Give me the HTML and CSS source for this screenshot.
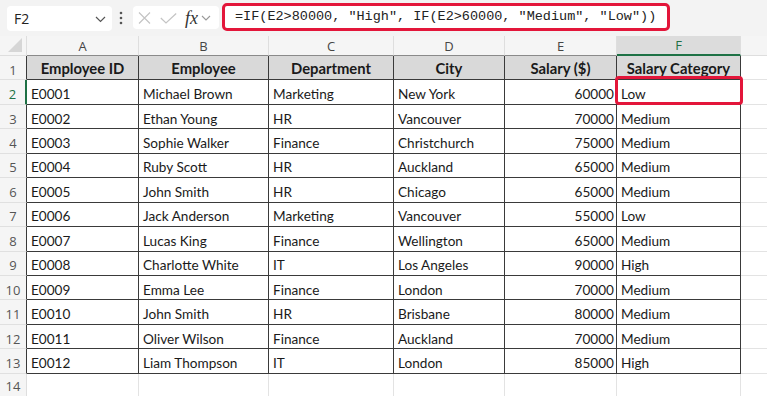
FILE: index.html
```html
<!DOCTYPE html>
<html>
<head>
<meta charset="utf-8">
<link rel="stylesheet" href="styles.css">
</head>
<body>
<div class="app">
  <div class="toolbar">
    <div class="namebox">
      <span class="nb-text">F2</span>
      <svg class="nb-chev" width="11" height="7" viewBox="0 0 11 7"><path d="M1 1 L5.5 5.5 L10 1" fill="none" stroke="#555" stroke-width="1.2"/></svg>
    </div>
    <svg class="dots" width="4" height="14" viewBox="0 0 4 14"><circle cx="2" cy="2" r="1.3" fill="#555"/><circle cx="2" cy="7" r="1.3" fill="#555"/><circle cx="2" cy="12" r="1.3" fill="#555"/></svg>
    <div class="fxbox">
      <svg class="ic-x" width="13" height="12" viewBox="0 0 13 12"><path d="M1 0.5 L12 11.5 M12 0.5 L1 11.5" fill="none" stroke="#c4c4c4" stroke-width="1.2"/></svg>
      <svg class="ic-v" width="17" height="11" viewBox="0 0 17 11"><path d="M0.8 5 L6 10 L16.2 0.5" fill="none" stroke="#c4c4c4" stroke-width="1.2"/></svg>
      <span class="fx">fx</span>
      <svg class="fx-chev" width="10" height="6" viewBox="0 0 10 6"><path d="M1 1 L5 5 L9 1" fill="none" stroke="#999" stroke-width="1.1"/></svg>
    </div>
    <div class="formula">=IF(E2&gt;80000, "High", IF(E2&gt;60000, "Medium", "Low"))</div>
  </div>
  <div class="sheet">
    <div class="ch corner"><svg width="14" height="14" viewBox="0 0 14 14"><path d="M14 0 L14 14 L0 14 Z" fill="#d6d6d6"/></svg></div>
    <div class="ch">A</div><div class="ch">B</div><div class="ch">C</div><div class="ch">D</div><div class="ch">E</div><div class="ch sel">F</div><div class="ch last"></div>

    <div class="rn">1</div>
    <div class="c hd">Employee ID</div><div class="c hd">Employee</div><div class="c hd">Department</div><div class="c hd">City</div><div class="c hd">Salary ($)</div><div class="c hd">Salary Category</div><div class="g"></div>

    <div class="rn rsel">2</div>
    <div class="c">E0001</div><div class="c">Michael Brown</div><div class="c">Marketing</div><div class="c">New York</div><div class="c n">60000</div><div class="c active">Low<span class="redbox"></span></div><div class="g"></div>

    <div class="rn">3</div>
    <div class="c">E0002</div><div class="c">Ethan Young</div><div class="c">HR</div><div class="c">Vancouver</div><div class="c n">70000</div><div class="c">Medium</div><div class="g"></div>

    <div class="rn">4</div>
    <div class="c">E0003</div><div class="c">Sophie Walker</div><div class="c">Finance</div><div class="c">Christchurch</div><div class="c n">75000</div><div class="c">Medium</div><div class="g"></div>

    <div class="rn">5</div>
    <div class="c">E0004</div><div class="c">Ruby Scott</div><div class="c">HR</div><div class="c">Auckland</div><div class="c n">65000</div><div class="c">Medium</div><div class="g"></div>

    <div class="rn">6</div>
    <div class="c">E0005</div><div class="c">John Smith</div><div class="c">HR</div><div class="c">Chicago</div><div class="c n">65000</div><div class="c">Medium</div><div class="g"></div>

    <div class="rn">7</div>
    <div class="c">E0006</div><div class="c">Jack Anderson</div><div class="c">Marketing</div><div class="c">Vancouver</div><div class="c n">55000</div><div class="c">Low</div><div class="g"></div>

    <div class="rn">8</div>
    <div class="c">E0007</div><div class="c">Lucas King</div><div class="c">Finance</div><div class="c">Wellington</div><div class="c n">65000</div><div class="c">Medium</div><div class="g"></div>

    <div class="rn">9</div>
    <div class="c">E0008</div><div class="c">Charlotte White</div><div class="c">IT</div><div class="c">Los Angeles</div><div class="c n">90000</div><div class="c">High</div><div class="g"></div>

    <div class="rn">10</div>
    <div class="c">E0009</div><div class="c">Emma Lee</div><div class="c">Finance</div><div class="c">London</div><div class="c n">70000</div><div class="c">Medium</div><div class="g"></div>

    <div class="rn">11</div>
    <div class="c">E0010</div><div class="c">John Smith</div><div class="c">HR</div><div class="c">Brisbane</div><div class="c n">80000</div><div class="c">Medium</div><div class="g"></div>

    <div class="rn">12</div>
    <div class="c">E0011</div><div class="c">Oliver Wilson</div><div class="c">Finance</div><div class="c">Auckland</div><div class="c n">70000</div><div class="c">Medium</div><div class="g"></div>

    <div class="rn">13</div>
    <div class="c">E0012</div><div class="c">Liam Thompson</div><div class="c">IT</div><div class="c">London</div><div class="c n">85000</div><div class="c">High</div><div class="g"></div>

    <div class="rn empty">14</div>
    <div class="e"></div><div class="e"></div><div class="e"></div><div class="e"></div><div class="e"></div><div class="e"></div><div class="e last"></div>
  </div>
</div>
</body>
</html>
```

FILE: styles.css
```css
html, body {
  margin: 0;
  padding: 0;
  background: #ffffff;
}
.app {
  width: 767px;
  height: 396px;
  overflow: hidden;
  display: flex;
  flex-direction: column;
  font-family: Lato, "Liberation Sans", sans-serif;
}
.toolbar {
  height: 36px;
  flex: none;
  background: #f3f3f3;
  display: flex;
  align-items: flex-start;
  box-sizing: border-box;
}
.namebox {
  margin: 6px 0 0 7px;
  width: 105px;
  height: 25px;
  background: #fff;
  border-radius: 4px;
  display: flex;
  align-items: center;
  justify-content: space-between;
  padding: 0 6px 0 7px;
  box-sizing: border-box;
  font-family: "Open Sans", sans-serif;
  font-size: 14px;
  color: #222;
}
.nb-chev { margin-top: 1px; }
.dots {
  margin: 11px 0 0 7px;
}
.fxbox {
  margin: 6px 0 0 10px;
  width: 86px;
  height: 23px;
  background: #fff;
  border-radius: 4px;
  display: flex;
  align-items: center;
  padding-left: 5px;
  box-sizing: border-box;
}
.ic-x { margin-top: 1px; }
.ic-v { margin: 1px 0 0 9px; }
.fx {
  font-family: "Liberation Serif", serif;
  font-style: italic;
  font-size: 18px;
  color: #333;
  margin-left: 8px;
  line-height: 20px;
}
.fx-chev { margin: 1px 0 0 3px; }
.formula {
  margin: 3px 0 0 3px;
  width: 448px;
  height: 28px;
  background: #fff;
  border: 3px solid #e3163a;
  border-radius: 5px;
  box-sizing: border-box;
  padding-left: 10px;
  font-family: "Liberation Mono", monospace;
  font-size: 13.5px;
  line-height: 22px;
  color: #222;
  white-space: nowrap;
}
.sheet {
  flex: 1;
  min-height: 0;
  display: grid;
  grid-template-columns: 27px 112px 130px 125px 111px 112px 124px 1fr;
  grid-template-rows: 20px repeat(13, 24.45px) 1fr;
  font-size: 13.6px;
  color: #1a1a1a;
}
.ch {
  background: #f5f5f5;
  border-right: 1px solid #dedede;
  border-bottom: 1px solid #8a8a8a;
  font-family: "Open Sans", sans-serif;
  font-size: 13px;
  color: #454545;
  display: flex;
  align-items: center;
  justify-content: center;
}
.ch.corner {
  justify-content: flex-end;
  align-items: flex-end;
  padding: 0 4px 3px 0;
  border-bottom-color: #dedede;
}
.ch.last { border-right: none; border-bottom-color: #dedede; }
.ch.sel {
  background: #dcdcdc;
  color: #1e7145;
  border-bottom: 2px solid #1e7145;
}
.rn {
  background: #f5f5f5;
  border-right: 1px solid #3a3a3a;
  border-bottom: 1px solid #e0e0e0;
  font-family: "Open Sans", sans-serif;
  font-size: 13px;
  color: #555;
  display: flex;
  align-items: center;
  justify-content: center;
  padding-top: 4px;
  box-sizing: border-box;
}
.rn.rsel {
  color: #1e7145;
  border-right: 2px solid #1e7145;
}
.rn.empty {
  border-right-color: #dedede;
  border-bottom: none;
  align-items: flex-end;
  padding: 0 0 2px 0;
  line-height: 16px;
}
.c {
  position: relative;
  border-right: 1px solid #3a3a3a;
  border-bottom: 1px solid #3a3a3a;
  display: flex;
  align-items: center;
  padding: 4px 2px 0 4px;
  white-space: nowrap;
  overflow: visible;
  min-width: 0;
}
.c.hd {
  background: #d9d9d9;
  font-weight: bold;
  font-size: 14.8px;
  justify-content: center;
  padding: 1px 0 0 0;
}
.c.n { justify-content: flex-end; }
.g {
  border-bottom: 1px solid #e3e3e3;
}
.e {
  border-right: 1px solid #e3e3e3;
}
.e.last { border-right: none; }
.redbox {
  position: absolute;
  left: -2px;
  right: -3px;
  top: -4px;
  bottom: -1px;
  border: 3px solid #e3163a;
  border-radius: 4px;
}
```
